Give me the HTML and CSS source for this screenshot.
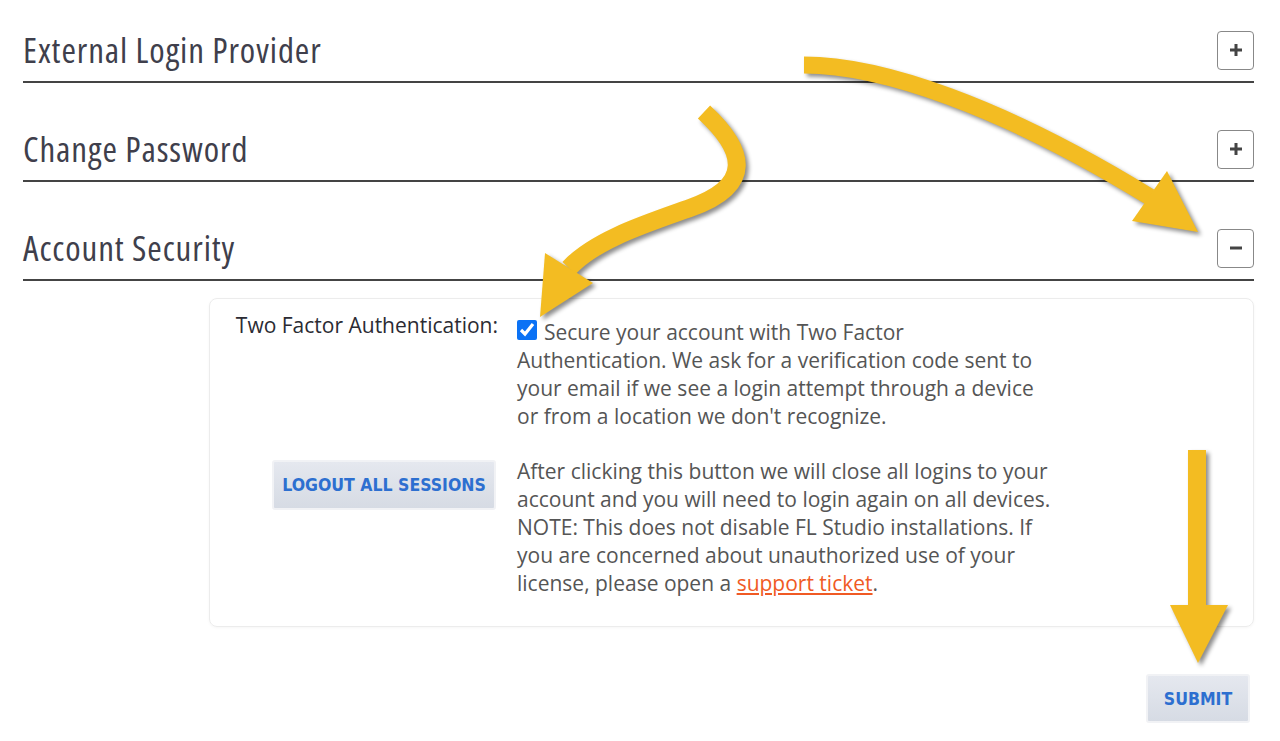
FILE: index.html
```html
<!DOCTYPE html>
<html lang="en">

<head>
  <meta charset="UTF-8">
  <meta name="viewport" content="width=device-width, initial-scale=1.0">
  <title>Account Settings</title>
  <link rel="stylesheet" href="styles.css">
</head>

<body>
  <div class="page">
    <div class="section first">
      <h2>External Login Provider</h2>
      <button class="toggle-btn" type="button" aria-label="Expand">
        <svg width="14" height="14" viewBox="0 0 14 14"><path d="M7 1v12M1 7h12" stroke="#444" stroke-width="3" /></svg>
      </button>
    </div>

    <div class="section">
      <h2>Change Password</h2>
      <button class="toggle-btn" type="button" aria-label="Expand">
        <svg width="14" height="14" viewBox="0 0 14 14"><path d="M7 1v12M1 7h12" stroke="#444" stroke-width="3" /></svg>
      </button>
    </div>

    <div class="section">
      <h2>Account Security</h2>
      <button class="toggle-btn" type="button" aria-label="Collapse">
        <svg width="14" height="14" viewBox="0 0 14 14"><path d="M1 7h12" stroke="#444" stroke-width="3" /></svg>
      </button>
    </div>

    <div class="card">
      <div class="form-grid">
        <label class="field-label" for="twoFactor">Two Factor Authentication:</label>
        <p class="field-text">
          <input type="checkbox" id="twoFactor" class="check" checked>Secure your account with Two Factor
          Authentication. We ask for a verification code sent to your email if we see a login attempt through a
          device or from a location we don't recognize.
        </p>

        <div class="field-action">
          <button class="btn btn-logout" type="button">LOGOUT ALL SESSIONS</button>
        </div>
        <p class="field-text">
          After clicking this button we will close all logins to your account and you will need to login again on
          all devices. NOTE: This does not disable FL Studio installations. If you are concerned about unauthorized
          use of your license, please open a <a href="#" class="link">support ticket</a>.
        </p>
      </div>
    </div>

    <div class="actions">
      <button class="btn btn-submit" type="submit">SUBMIT</button>
    </div>
  </div>

  <!-- yellow callout arrows drawn over the page -->
  <svg class="callouts" width="1280" height="741" viewBox="0 0 1280 741">
    <g class="arrow">
      <path d="M804 65 C 880 65, 1000 105, 1150 197" fill="none" stroke="#f3bc22" stroke-width="17" />
      <polygon points="1198,232 1167,171 1132,221" fill="#f3bc22" />
    </g>
    <g class="arrow">
      <path d="M704 112 C 745 150, 755 185, 690 208 C 645 224, 595 240, 569 268" fill="none" stroke="#f3bc22" stroke-width="18" />
      <polygon points="540,317 545,253 593,283" fill="#f3bc22" />
    </g>
    <g class="arrow">
      <rect x="1188" y="450" width="18" height="157" fill="#f3bc22" />
      <polygon points="1170,605 1228,605 1198,663" fill="#f3bc22" />
    </g>
  </svg>
</body>

</html>
```

FILE: styles.css
```css
body {
  margin: 0;
  padding: 0;
  background-color: #fff;
  font-family: 'Open Sans', 'Liberation Sans', sans-serif;
  color: #555;
}

.page {
  padding: 0 26px 0 23px;
}

.section {
  display: flex;
  justify-content: space-between;
  align-items: center;
  margin-top: 46px;
  padding-bottom: 11px;
  border-bottom: 2px solid #444;
}

.section.first {
  margin-top: 30px;
}

.section h2 {
  margin: 0;
  font-family: 'Open Sans', sans-serif;
  font-stretch: 75%;
  font-weight: 400;
  font-size: 35px;
  line-height: 40px;
  letter-spacing: 0.9px;
  color: #3f3f4c;
}

.toggle-btn {
  width: 37px;
  height: 39px;
  padding: 0;
  display: flex;
  align-items: center;
  justify-content: center;
  background-color: #fff;
  border: 1px solid #888;
  border-radius: 4px;
}

.card {
  margin: 17px 0 0 186px;
  padding: 19px 20px 29px 20px;
  border: 1px solid #ececec;
  border-radius: 8px;
  box-shadow: 0 1px 3px rgba(0, 0, 0, 0.04);
}

.form-grid {
  display: grid;
  grid-template-columns: 268px 536px;
  column-gap: 19px;
  row-gap: 27px;
}

.field-label {
  margin-top: -7px;
  text-align: right;
  font-size: 21px;
  line-height: 28px;
  color: #2b2b33;
}

.field-text {
  margin: 0;
  font-size: 21px;
  line-height: 28px;
  color: #555;
}

.check {
  width: 20px;
  height: 20px;
  margin: 0 7px 0 0;
  vertical-align: 0;
  accent-color: #0b72f5;
}

.field-action {
  display: flex;
  justify-content: flex-end;
  padding-top: 3px;
  padding-right: 2px;
}

.btn {
  height: 50px;
  font-family: 'DejaVu Sans Condensed', 'DejaVu Sans', sans-serif;
  font-stretch: condensed;
  font-weight: bold;
  font-size: 17.5px;
  color: #2d6fd0;
  background: linear-gradient(#e5e8ef, #d6dbe4);
  border: 2px solid #f1f2f5;
  border-radius: 3px;
}

.btn-logout {
  width: 224px;
  padding: 0;
}

.btn-submit {
  width: 104px;
  height: 49px;
  padding: 0;
}

.link {
  color: #f05a24;
}

.actions {
  display: flex;
  justify-content: flex-end;
  margin-top: 47px;
  padding-right: 4px;
}

.callouts {
  position: absolute;
  top: 0;
  left: 0;
  pointer-events: none;
}

.arrow {
  filter: drop-shadow(3px 3px 2px rgba(0, 0, 0, 0.45));
}
```
